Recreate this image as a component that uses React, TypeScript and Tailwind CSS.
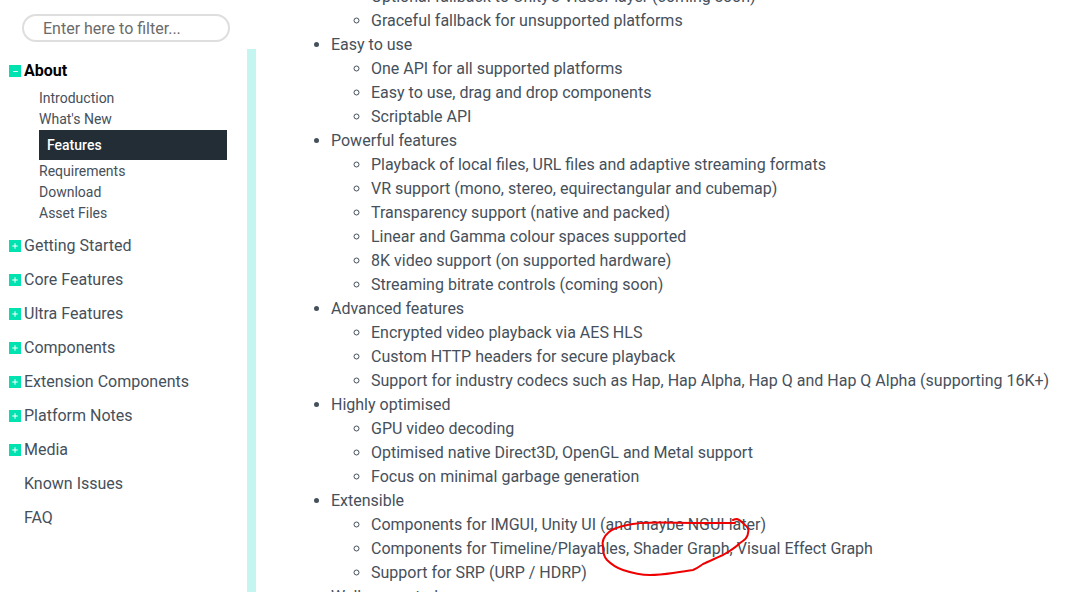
import { Minus, Plus } from "lucide-react"

type Group = { title: string | null; items: string[] }

const groups: Group[] = [
  {
    title: null,
    items: ["Optional fallback to Unity's VideoPlayer (coming soon)", "Graceful fallback for unsupported platforms"],
  },
  {
    title: "Easy to use",
    items: ["One API for all supported platforms", "Easy to use, drag and drop components", "Scriptable API"],
  },
  {
    title: "Powerful features",
    items: [
      "Playback of local files, URL files and adaptive streaming formats",
      "VR support (mono, stereo, equirectangular and cubemap)",
      "Transparency support (native and packed)",
      "Linear and Gamma colour spaces supported",
      "8K video support (on supported hardware)",
      "Streaming bitrate controls (coming soon)",
    ],
  },
  {
    title: "Advanced features",
    items: [
      "Encrypted video playback via AES HLS",
      "Custom HTTP headers for secure playback",
      "Support for industry codecs such as Hap, Hap Alpha, Hap Q and Hap Q Alpha (supporting 16K+)",
    ],
  },
  {
    title: "Highly optimised",
    items: [
      "GPU video decoding",
      "Optimised native Direct3D, OpenGL and Metal support",
      "Focus on minimal garbage generation",
    ],
  },
  {
    title: "Extensible",
    items: [
      "Components for IMGUI, Unity UI (and maybe NGUI later)",
      "Components for Timeline/Playables, Shader Graph, Visual Effect Graph",
      "Support for SRP (URP / HDRP)",
    ],
  },
  { title: "Well supported", items: ["Email support"] },
]

const aboutPages = ["Introduction", "What's New", "Features", "Requirements", "Download", "Asset Files"]

const sections = [
  { name: "Getting Started", expandable: true },
  { name: "Core Features", expandable: true },
  { name: "Ultra Features", expandable: true },
  { name: "Components", expandable: true },
  { name: "Extension Components", expandable: true },
  { name: "Platform Notes", expandable: true },
  { name: "Media", expandable: true },
  { name: "Known Issues", expandable: false },
  { name: "FAQ", expandable: false },
]

function Toggle({ open }: { open: boolean }) {
  return (
    <span className="flex h-[12px] w-[12px] shrink-0 items-center justify-center bg-[#00e3b1] text-white">
      {open ? <Minus size={7} strokeWidth={3} /> : <Plus size={8} strokeWidth={3} />}
    </span>
  )
}

function Sidebar() {
  return (
    <aside className="w-[247px] shrink-0 pt-[14px]">
      <input
        type="text"
        placeholder="Enter here to filter..."
        className="ml-[22px] h-[28px] w-[208px] rounded-full border-2 border-[#dedede] pl-[19px] text-[16px] text-[#333] outline-none placeholder:text-[#6b6b6b]"
      />
      <nav className="mt-[17px] pl-[9px]">
        <div className="flex h-[24px] items-center gap-[3px]">
          <Toggle open />
          <span className="text-[16px] font-bold text-black">About</span>
        </div>
        <ul className="mt-[5px] pl-[30px] text-[14px] text-[#46505b]">
          {aboutPages.map((page) =>
            page === "Features" ? (
              <li
                key={page}
                className="mb-[1px] mr-[20px] flex h-[30px] items-center bg-[#222d36] px-[8px] font-medium text-white"
              >
                {page}
              </li>
            ) : (
              <li key={page} className="leading-[21px]">
                {page}
              </li>
            )
          )}
        </ul>
        <ul className="mt-[5px]">
          {sections.map((s) => (
            <li key={s.name} className="flex h-[34px] items-center gap-[3px] text-[16px] text-[#46505b]">
              {s.expandable ? <Toggle open={false} /> : <span className="w-[12px] shrink-0" />}
              {s.name}
            </li>
          ))}
        </ul>
      </nav>
    </aside>
  )
}

function Content() {
  return (
    <main className="flex-1 text-[16px] leading-[24px] text-[#46505b]">
      <ul className="mt-[-15px] list-disc pl-[75px] marker:text-[#46505b]">
        {groups.map((g, i) => (
          <li key={i} className={g.title ? "" : "list-none"}>
            {g.title}
            <ul className="list-[circle] pl-[40px]">
              {g.items.map((item) => (
                <li key={item}>{item}</li>
              ))}
            </ul>
          </li>
        ))}
      </ul>
    </main>
  )
}

export default function App() {
  return (
    <div
      className="relative flex h-[592px] overflow-hidden bg-white"
      style={{ fontFamily: "Roboto, 'Liberation Sans', sans-serif" }}
    >
      <Sidebar />
      <div className="mt-[49px] w-[9px] shrink-0 bg-[#c5f5f1]" />
      <Content />
      <svg className="pointer-events-none absolute inset-0" width="1082" height="592" aria-hidden="true">
        <path
          d="M735 523 C 715 523, 690 523, 660 522.5 C 645 522.5, 635 523, 627 525 C 618 527, 612 529, 609 532 C 603 537, 602 543, 603 547 C 603 553, 604 557, 607 560 C 612 565, 617 568, 623 570 C 632 573, 641 575, 650 575 C 658 575, 666 574, 673 573 C 680 572, 687 571, 693 570 C 698 568, 700 566, 703 564 C 710 561, 716 558, 723 555 C 730 551, 735 548, 740 543 C 745 540, 748 537, 748 533 C 749 530, 748 527, 745 525 C 742 522, 740 520, 737 519 C 735 519, 734 519.5, 733 520"
          fill="none"
          stroke="#ee0000"
          strokeWidth="2"
          strokeLinecap="round"
        />
      </svg>
    </div>
  )
}
